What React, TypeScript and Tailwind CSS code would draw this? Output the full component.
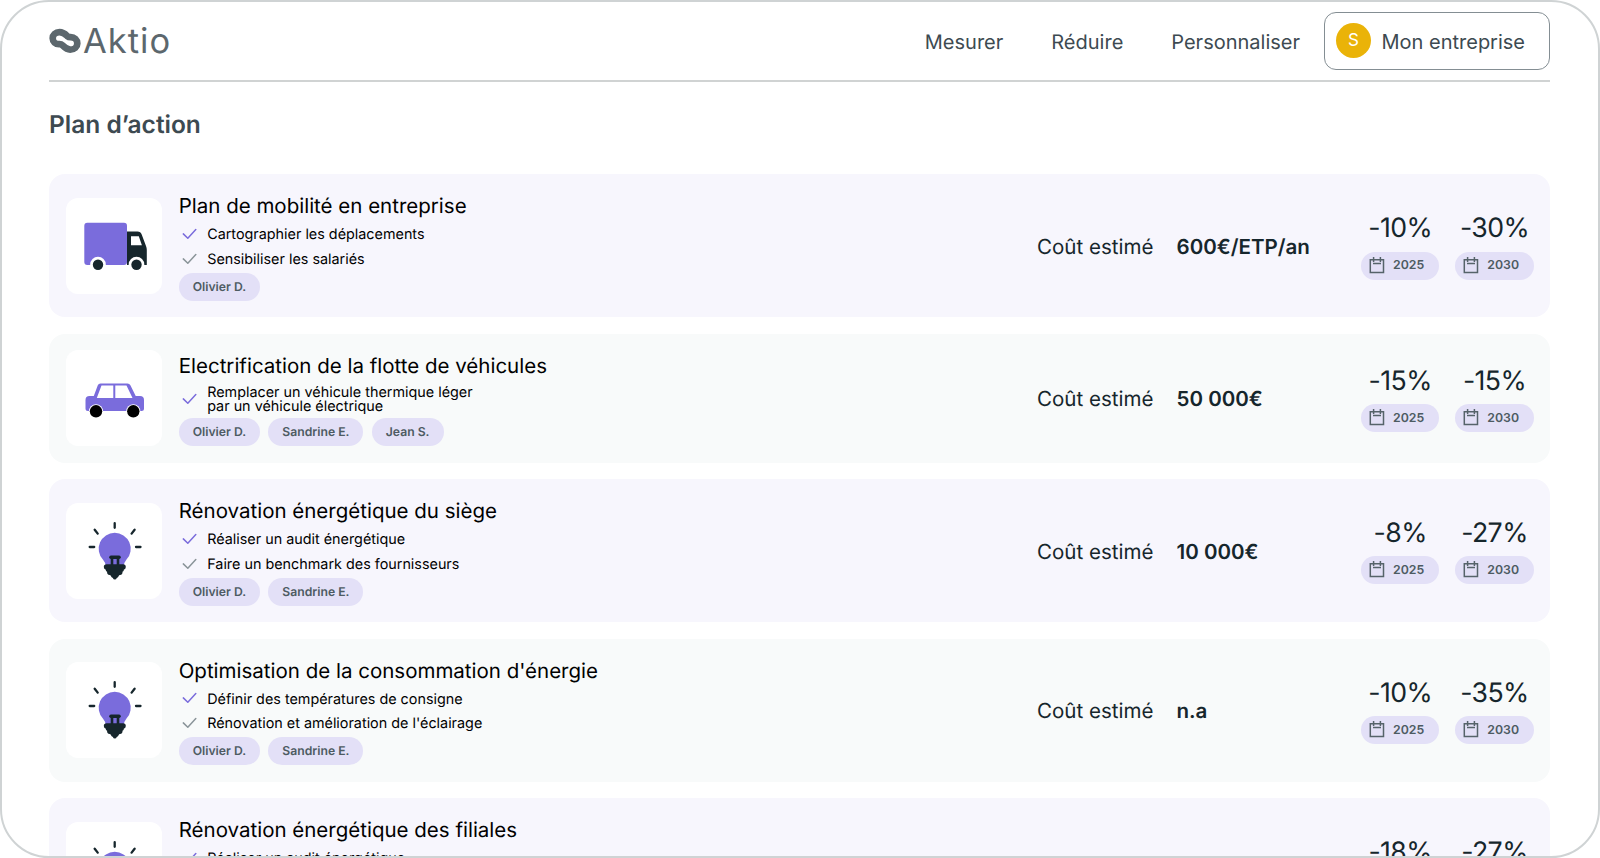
// src/App.tsx
import type { ReactNode } from 'react';

type IconName = 'truck' | 'car' | 'bulb';

interface Action {
  title: string;
  icon: IconName;
  tasks: { label: ReactNode; done: boolean }[];
  owners: string[];
  cost: string;
  targets: { value: string; year: string }[];
}

const actions: Action[] = [
  {
    title: 'Plan de mobilité en entreprise',
    icon: 'truck',
    tasks: [
      { label: 'Cartographier les déplacements', done: true },
      { label: 'Sensibiliser les salariés', done: false },
    ],
    owners: ['Olivier D.'],
    cost: '600€/ETP/an',
    targets: [{ value: '-10%', year: '2025' }, { value: '-30%', year: '2030' }],
  },
  {
    title: 'Electrification de la flotte de véhicules',
    icon: 'car',
    tasks: [
      { label: <>Remplacer un véhicule thermique léger<br />par un véhicule électrique</>, done: true },
    ],
    owners: ['Olivier D.', 'Sandrine E.', 'Jean S.'],
    cost: '50 000€',
    targets: [{ value: '-15%', year: '2025' }, { value: '-15%', year: '2030' }],
  },
  {
    title: 'Rénovation énergétique du siège',
    icon: 'bulb',
    tasks: [
      { label: 'Réaliser un audit énergétique', done: true },
      { label: 'Faire un benchmark des fournisseurs', done: false },
    ],
    owners: ['Olivier D.', 'Sandrine E.'],
    cost: '10 000€',
    targets: [{ value: '-8%', year: '2025' }, { value: '-27%', year: '2030' }],
  },
  {
    title: "Optimisation de la consommation d'énergie",
    icon: 'bulb',
    tasks: [
      { label: 'Définir des températures de consigne', done: true },
      { label: "Rénovation et amélioration de l'éclairage", done: false },
    ],
    owners: ['Olivier D.', 'Sandrine E.'],
    cost: 'n.a',
    targets: [{ value: '-10%', year: '2025' }, { value: '-35%', year: '2030' }],
  },
  {
    title: 'Rénovation énergétique des filiales',
    icon: 'bulb',
    tasks: [
      { label: 'Réaliser un audit énergétique', done: true },
      { label: 'Faire un benchmark des fournisseurs', done: false },
    ],
    owners: ['Olivier D.', 'Sandrine E.'],
    cost: '10 000€',
    targets: [{ value: '-18%', year: '2025' }, { value: '-27%', year: '2030' }],
  },
];

const Logo = () => (
  <svg className="w-8 h-[26px]" viewBox="0 0 32 26" fill="none">
    <path
      d="M10.500 4.200C6.500 4.200 3.700 6.900 3.700 10.200c0 3.400 2.800 6 6.300 6 1.600 0 2.300-.1 3.300.9 1.900 1.900 4 4.500 7.900 4.500 4.200 0 7.100-2.800 7.100-6.200 0-3.500-2.900-6.200-6.600-6.200-1.600 0-2.200 0-3.300-1C16.500 6.400 14.400 4.200 10.500 4.200Z"
      stroke="#5c676d"
      strokeWidth="6.700"
    />
  </svg>
);

const TruckIcon = () => (
  <svg className="size-full" viewBox="0 0 96 96">
    <path d="M61 33.500h10.500q3.200 0 4.200 3l4.300 11.500q.8 2 .8 4V67H61z" fill="#16262c" />
    <path d="M65 38.300h7.800l3.100 8.900H65z" fill="#fff" />
    <rect x="18.300" y="24.700" width="42.700" height="42.300" rx="3" fill="#7a6cdc" />
    <circle cx="32" cy="66.500" r="7.800" fill="#fff" />
    <circle cx="70.500" cy="66.500" r="7.800" fill="#fff" />
    <path d="M18 67h66v9H18z" fill="#fff" />
    <circle cx="32" cy="66.700" r="5.200" fill="#16262c" />
    <circle cx="70.500" cy="66.700" r="5.200" fill="#16262c" />
  </svg>
);

const CarIcon = () => (
  <svg className="size-full" viewBox="0 0 96 96">
    <path
      d="M34.500 33.500h27q2 0 2.900 1.800l5.300 10.700h4.300q4 0 4 4v8.500q0 2.500-2.500 2.500H22q-2.500 0-2.500-2.500V50q0-4 4-4h4.300l4-10.700q.7-1.800 2.700-1.800Z"
      fill="#7a6cdc"
    />
    <path d="M35.500 35.500h11.800v12.500H30.800zM49.300 35.500H60.500l6 12.500H49.300z" fill="#fff" />
    <circle cx="30" cy="61.300" r="7" fill="#fff" />
    <circle cx="67.300" cy="61.300" r="7" fill="#fff" />
    <circle cx="30" cy="61.300" r="6.200" fill="#000" />
    <circle cx="67.300" cy="61.300" r="6.200" fill="#000" />
  </svg>
);

const BulbIcon = () => (
  <svg className="size-full" viewBox="0 0 96 96">
    <path d="M48.700 29.800a16 16 0 0 1 11.800 26.800q-2.500 3-2.500 6H39.500q0-3-2.600-6A16 16 0 0 1 48.700 29.800Z" fill="#7a6cdc" />
    <g stroke="#16262c" strokeWidth="2.300" strokeLinecap="round" fill="none">
      <path d="M48.700 20.200v4.600M28.700 26.700l3 3.900M68.600 26.700l-3 3.900M23.700 44h4.500M70 44h4.500" />
      <path d="M45 54.300h8" strokeWidth="3.600" />
      <path d="M46 55v8M52 55v8" strokeWidth="2.600" />
    </g>
    <path
      d="M41 61.200h16q2.800 0 2.800 2.700 0 2.300-2 2.800.3 1.300-1.300 2 .3 2.800-2.500 3.300-1 .2-1.300 1-.5 1.400-2 1.900-.3 1.500-1.900 1.500-1.500 0-1.900-1.500-1.500-.5-2-1.900-.3-.8-1.300-1-2.800-.5-2.500-3.300-1.600-.7-1.300-2-2-.5-2-2.800 0-2.700 2.900-2.700Z"
      fill="#16262c"
    />
  </svg>
);

const icons: Record<IconName, () => ReactNode> = {
  truck: TruckIcon,
  car: CarIcon,
  bulb: BulbIcon,
};

const Check = ({ done }: { done: boolean }) => (
  <svg className="size-5 shrink-0" viewBox="0 0 20 20" fill="none">
    <path
      d="M4.300 9.900l4.500 4.300 8-8.600"
      stroke={done ? '#7a6cdc' : '#8a9499'}
      strokeWidth="1.500"
      strokeLinecap="round"
      strokeLinejoin="round"
    />
  </svg>
);

const CalendarIcon = () => (
  <svg className="w-4 h-[17px] -mt-px" viewBox="0 0 16 17" fill="none" stroke="#56636a" strokeWidth="1.500">
    <path d="M1.300 2.800h13.200v12.800H1.300zM4.600 0v5M11.400 0v5M4 6.600h8" />
  </svg>
);

const ActionCard = ({ action, odd }: { action: Action; odd: boolean }) => {
  const Icon = icons[action.icon];

  return (
    <div className={`flex items-center shrink-0 rounded-2xl p-[16.400px] pl-[17px] ${odd ? 'bg-[#f8fafa]' : 'bg-[#f7f6fd]'}`}>
      <div className="size-24 shrink-0 bg-white rounded-xl">
        <Icon />
      </div>

      <div className="flex flex-col gap-1 ml-[16.700px] flex-1">
        <h2 className="text-[20.500px] leading-[27px] pt-[1.500px] pb-[0.500px] text-black">{action.title}</h2>
        {action.tasks.map((task, i) => (
          <div key={i} className="flex items-center gap-[8.500px] min-h-[20.600px] text-[14.370px] leading-[14.400px] text-black">
            <Check done={task.done} />
            <span className="pt-[2px] -mb-px">{task.label}</span>
          </div>
        ))}
        <div className="flex gap-[8.300px]">
          {action.owners.map((owner) => (
            <span key={owner} className="h-7 px-3.5 rounded-full bg-[#e3e0f7] text-[12.200px] leading-7 font-semibold text-[#4d5b62]">
              {owner}
            </span>
          ))}
        </div>
      </div>

      <div className="flex items-center gap-[23px] w-[324px] pt-[3px] text-[20.550px] text-[#16262c]">
        <span>Coût estimé</span>
        <span className="font-semibold">{action.cost}</span>
      </div>

      <div className="flex gap-4">
        {action.targets.map((target) => (
          <div key={target.year} className="flex flex-col items-center w-[78.300px]">
            <span className="text-[26.700px] leading-[33px] mb-[6.500px] tracking-[-0.600px] text-[#16262c]">{target.value}</span>
            <span className="flex items-center gap-2 h-7 w-full pl-2 rounded-full bg-[#e3e0f7] text-[12.300px] font-semibold text-[#4d5b62]">
              <CalendarIcon />
              {target.year}
            </span>
          </div>
        ))}
      </div>
    </div>
  );
};

const App = () => {
  return (
    <div className="h-[858px] w-[1600px] bg-white overflow-hidden font-['Inter',sans-serif] [text-rendering:geometricPrecision]">
      <div className="h-full flex flex-col border-2 border-[#cfd3d4] rounded-[49px] overflow-hidden pl-[47px] pr-12">
        <header className="flex items-center justify-between h-20 shrink-0 border-b-2 border-[#d0d3d3]">
          <div className="flex items-center text-[#5c676d]">
            <Logo />
            <span className="ml-[2px] mt-[3px] text-[34.500px] leading-none font-normal tracking-[1px]">Aktio</span>
          </div>
          <nav className="flex items-center text-[20px] text-[#3d4a51]">
            <a className="mr-12 pt-[2px]">Mesurer</a>
            <a className="mr-12 pt-[2px]">Réduire</a>
            <a className="mr-6 pt-[2px]">Personnaliser</a>
            <button className="flex items-center h-[58px] w-[226px] pl-[11px] pb-px border border-[#848e93] rounded-xl">
              <span className="size-[35px] rounded-full bg-[#eab308] text-white text-[17px] flex items-center justify-center">S</span>
              <span className="ml-[10.500px] pt-[3px]">Mon entreprise</span>
            </button>
          </nav>
        </header>

        <h1 className="mt-[25px] text-[24.500px] leading-[34px] font-semibold text-[#3d4a51]">Plan d’action</h1>

        <main className="mt-[33.300px] flex flex-col gap-[16.600px]">
          {actions.map((action, i) => (
            <ActionCard key={action.title} action={action} odd={i % 2 === 1} />
          ))}
        </main>
      </div>
    </div>
  );
};

export default App;
